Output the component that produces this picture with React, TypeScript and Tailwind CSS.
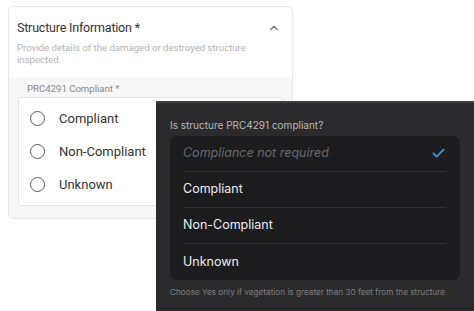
import { ChevronUp, Check } from "lucide-react";

const radios = ["Compliant", "Non-Compliant", "Unknown"];
const options = ["Compliant", "Non-Compliant", "Unknown"];

export default function App() {
  return (
    <div className="relative w-[474px] h-[311px] overflow-hidden bg-white">
      {/* Android form card */}
      <div
        className="ml-[8px] mt-[6px] w-[285px] h-[213px] rounded-[5px] border border-[#e8e8e8] bg-white overflow-hidden flex flex-col"
        style={{ fontFamily: "Roboto, 'Liberation Sans', sans-serif" }}
      >
        <div className="px-[8px] pt-[12px] h-[70px] shrink-0">
          <div className="flex items-center justify-between">
            <h2 className="text-[12.5px] leading-[18px] tracking-[-0.2px] text-[#333]">Structure Information *</h2>
            <ChevronUp className="w-[14px] h-[14px] text-[#777] mr-[3px]" strokeWidth={2} />
          </div>
          <p className="mt-[5px] text-[9.6px] leading-[12px] text-[#b3b3b3]">
            Provide details of the damaged or destroyed structure
            <br />
            inspected.
          </p>
        </div>
        <div className="flex-1 bg-[#f7f7f7] px-[9px] pt-[6px]">
          <div className="pl-[9px] text-[9.6px] leading-[12px] text-[#888]">PRC4291 Compliant *</div>
          <div className="mt-[2px] h-[109px] rounded-[3px] border border-[#e4e4e4] bg-white pl-[11px] pt-[13px] flex flex-col gap-[18px]">
            {radios.map((r) => (
              <div key={r} className="flex items-center h-[15px]">
                <span className="w-[15px] h-[15px] rounded-full border-[1.5px] border-[#5a5a5a]" />
                <span className="ml-[14px] text-[13px] text-[#333]">{r}</span>
              </div>
            ))}
          </div>
        </div>
      </div>

      {/* iOS picker overlay */}
      <div
        className="absolute left-[156px] top-[101px] w-[330px] h-[215px] bg-[#2b2b2d] border-t-[2px] border-[#3d3d3f]"
        style={{ fontFamily: "Inter, 'Liberation Sans', sans-serif" }}
      >
        <div className="pl-[14px] w-[304px]">
          <div className="pt-[15px] text-[10px] leading-[14px] text-[#b9b9bb]">
            Is structure PRC4291 compliant?
          </div>
          <div className="mt-[4px] rounded-[6px] bg-[#1c1c1e] pl-[13px] pr-[14px]">
            <div className="h-[36px] flex items-center justify-between border-b border-[#2e2e30]">
              <span className="italic text-[12.5px] text-[#6a6a6c]">Compliance not required</span>
              <Check className="w-[15px] h-[15px] text-[#2f93e8]" strokeWidth={3} />
            </div>
            {options.map((o, i) => (
              <div
                key={o}
                className={
                  i < options.length - 1
                    ? "h-[36px] flex items-center border-b border-[#2e2e30]"
                    : "h-[36px] flex items-center"
                }
              >
                <span className="text-[12.5px] text-[#ececee]">{o}</span>
              </div>
            ))}
          </div>
          <div className="mt-[6px] text-[8.2px] leading-[12px] text-[#7e7e80]">
            Choose Yes only if vegetation is greater than 30 feet from the structure
          </div>
        </div>
        <div className="mt-[9px] border-t border-[#242426]" />
      </div>
    </div>
  );
}
